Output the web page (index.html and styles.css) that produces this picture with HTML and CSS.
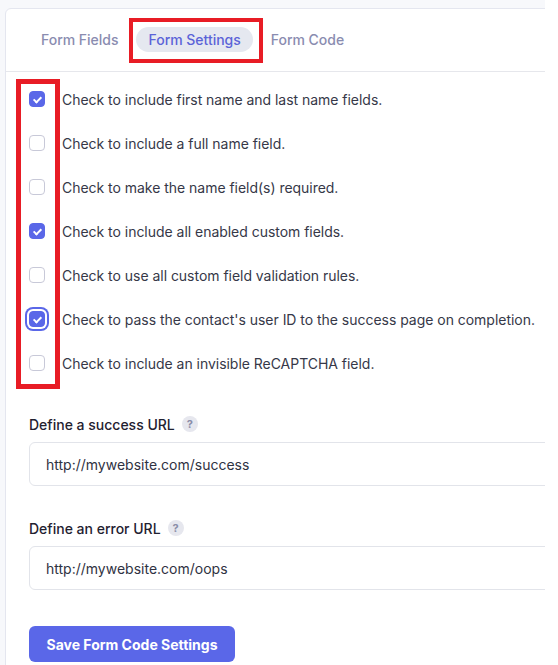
FILE: index.html
```html
<!DOCTYPE html>
<html>
<head>
<meta charset="utf-8">
<link rel="stylesheet" href="styles.css">
</head>
<body>
<div class="frame">
  <div class="card">
    <nav class="tabs">
      <span class="tab">Form Fields</span>
      <span class="tab active">Form Settings</span>
      <span class="tab">Form Code</span>
    </nav>
    <div class="body">
      <ul class="checks">
        <li class="row"><span class="cb on"></span>Check to include first name and last name fields.</li>
        <li class="row"><span class="cb"></span>Check to include a full name field.</li>
        <li class="row"><span class="cb"></span>Check to make the name field(s) required.</li>
        <li class="row"><span class="cb on"></span>Check to include all enabled custom fields.</li>
        <li class="row"><span class="cb"></span>Check to use all custom field validation rules.</li>
        <li class="row"><span class="cb on focus"></span>Check to pass the contact's user ID to the success page on completion.</li>
        <li class="row"><span class="cb"></span>Check to include an invisible ReCAPTCHA field.</li>
      </ul>
      <div class="field first">
        <label class="label">Define a success URL <span class="help">?</span></label>
        <div class="input">http://mywebsite.com/success</div>
      </div>
      <div class="field">
        <label class="label">Define an error URL <span class="help">?</span></label>
        <div class="input">http://mywebsite.com/oops</div>
      </div>
      <button class="btn">Save Form Code Settings</button>
    </div>
  </div>
  <div class="mark mark-tab"></div>
  <div class="mark mark-checks"></div>
</div>
</body>
</html>
```
FILE: styles.css
```css
* { box-sizing: border-box; }
html, body { margin: 0; padding: 0; background: #ffffff; }
body { font-family: Inter, "Noto Sans", sans-serif; }
.frame {
  position: relative;
  width: 545px;
  height: 665px;
  overflow: hidden;
  background: #f7f8fb;
  padding: 8px 0 0 5px;
}
.card {
  width: 640px;
  height: 700px;
  background: #ffffff;
  border: 1px solid #e4e6ef;
  border-radius: 6px;
}
.tabs {
  display: flex;
  align-items: center;
  gap: 6px;
  height: 63px;
  padding: 0 0 0 23px;
  border-bottom: 1px solid #e6e7ec;
}
.tab {
  font-size: 14px;
  font-weight: 500;
  color: #8a8cb0;
  padding: 4px 12px;
  line-height: 17px;
  border-radius: 13px;
  letter-spacing: -0.02px;
  margin-top: -1px;
}
.tab.active {
  background: #e5e8f0;
  color: #5b63d8;
}
.body { padding: 5px 0 0 23px; }
.checks { list-style: none; margin: 0; padding: 0; }
.row {
  display: flex;
  align-items: center;
  height: 44px;
  font-size: 14px;
  color: #363848;
  letter-spacing: -0.03px;
}
.cb {
  width: 16px;
  height: 16px;
  border: 1px solid #c8c9d8;
  border-radius: 4px;
  margin-right: 17px;
  flex: none;
  position: relative;
  background: #fff;
}
.cb.on {
  background: #5a67e8;
  border-color: #5a67e8;
}
.cb.on::after {
  content: "";
  position: absolute;
  left: 5px;
  top: 3px;
  width: 3px;
  height: 6px;
  border: solid #fff;
  border-width: 0 2px 2px 0;
  transform: rotate(45deg);
}
.cb.focus {
  box-shadow: 0 0 0 2px #fff, 0 0 0 4px #5a67e8;
}
.field { margin-top: 32px; }
.field.first { margin-top: 29px; }
.label {
  display: flex;
  align-items: center;
  height: 20px;
  font-size: 14px;
  font-weight: 500;
  color: #1f2130;
}
.help {
  display: inline-flex;
  align-items: center;
  justify-content: center;
  width: 16px;
  height: 16px;
  margin-left: 7px;
  border-radius: 50%;
  background: #e6e7ee;
  color: #8a8da8;
  font-size: 11px;
  font-weight: 700;
}
.input {
  margin-top: 8px;
  width: 560px;
  height: 44px;
  border: 1px solid #e2e4ea;
  border-radius: 6px;
  padding: 0 16px;
  display: flex;
  align-items: center;
  font-size: 14px;
  color: #2f3242;
}
.btn {
  display: block;
  margin-top: 36px;
  height: 36px;
  padding: 0;
  width: 206px;
  border: none;
  border-radius: 6px;
  background: #5a67e8;
  color: #fff;
  font-family: Inter, "Noto Sans", sans-serif;
  font-size: 14px;
  font-weight: 700;
  white-space: nowrap;
  text-align: center;
}
.mark {
  position: absolute;
  border: 4px solid #e81c25;
}
.mark-tab { left: 129px; top: 18px; width: 134px; height: 45px; }
.mark-checks { left: 16px; top: 79px; width: 44px; height: 310px; border-width: 5px; }
```
